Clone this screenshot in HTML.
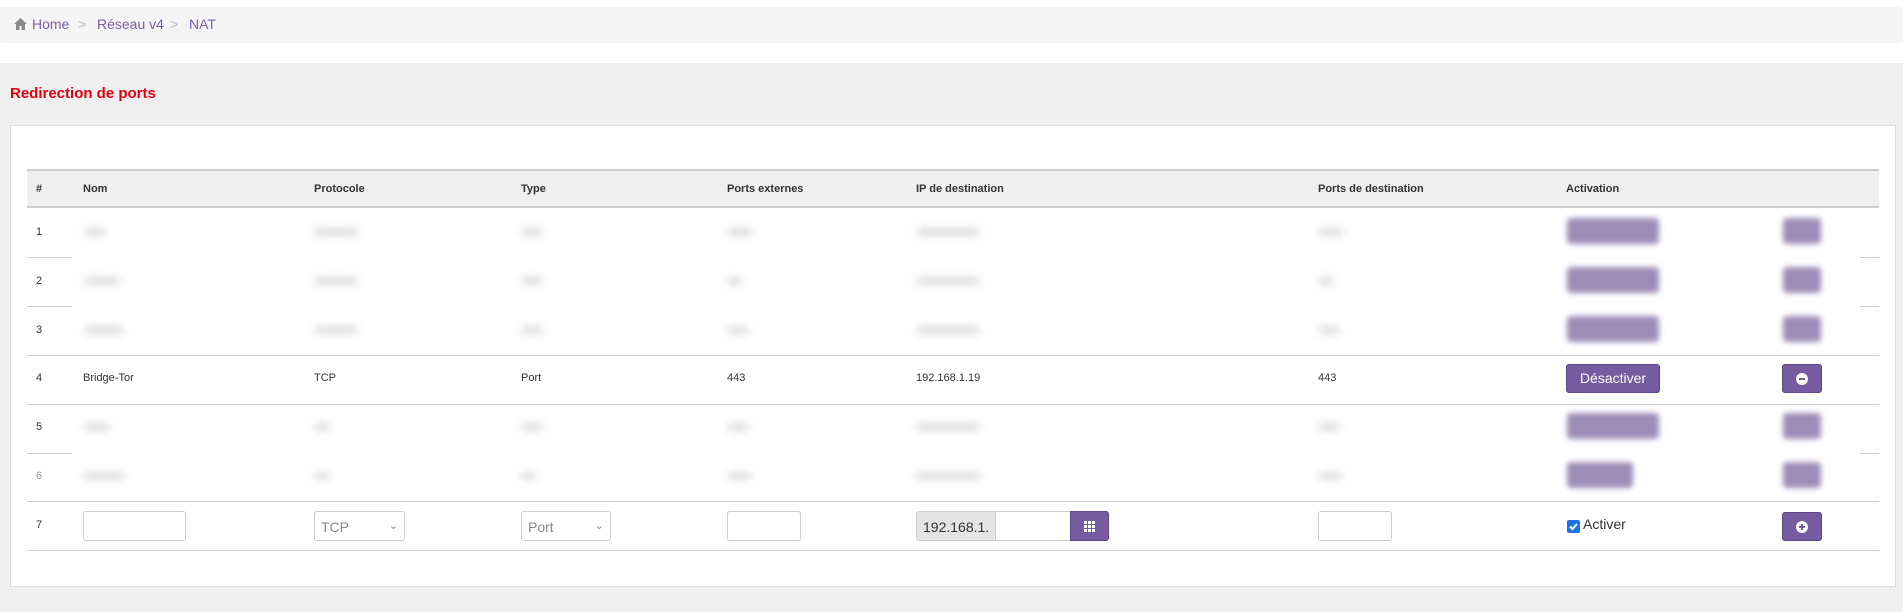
<!DOCTYPE html>
<html><head><meta charset="utf-8"><style>
*{box-sizing:border-box;margin:0;padding:0}
body{width:1903px;height:612px;background:#fff;font-family:"Liberation Sans",sans-serif;position:relative;overflow:hidden;color:#333}
.abs{position:absolute}
.bc{left:0;top:7px;width:1903px;height:36px;background:#f4f4f4;border-radius:3px}
.bc span{position:absolute;top:9px;font-size:14px;color:#7a5ea8}
.gray{left:0;top:63px;width:1903px;height:549px;background:#efefef}
.title{left:10px;top:85px;font-size:15px;font-weight:bold;color:#e2000f}
.card{left:10px;top:125px;width:1886px;height:462px;background:#fff;border:1px solid #ddd}
.th{left:27px;top:169px;width:1852px;height:39px;background:#efefef;border-top:2px solid #ccc;border-bottom:2px solid #ccc}
.h{position:absolute;top:183px;font-size:11px;font-weight:bold;color:#333}
.line{position:absolute;left:27px;width:1852px;height:1px;background:#ccc}
.t{position:absolute;font-size:11px;color:#333}
.bl{position:absolute;height:8px;background:#ddd;filter:blur(4px);border-radius:4px}
.bb{position:absolute;background:#9d8cb8;filter:blur(3px);border-radius:4px;height:26px}
.btn{position:absolute;background:#775ba0;border:1px solid #5f4787;border-radius:3px;color:#fff;font-size:14px;text-align:center}
.inp{position:absolute;top:511px;height:30px;border:1px solid #ccc;border-radius:3px;background:#fff;font-size:14px;color:#888;padding:7px 6px}
</style></head><body>
<div class="abs bc">
<svg class="abs" style="left:14px;top:11px" width="13" height="12" viewBox="0 0 13 12"><path d="M6.5 0L0 6h2v6h3.5V8h2v4H11V6h2z" fill="#888"/></svg>
<span style="left:32px">Home</span><span style="left:78px;color:#bbb">&gt;</span><span style="left:97px">Réseau v4</span><span style="left:170px;color:#bbb">&gt;</span><span style="left:189px">NAT</span>
</div>
<div class="abs gray"></div>
<div class="abs title">Redirection de ports</div>
<div class="abs card"></div>
<div class="abs th"></div>
<div class="h" style="left:36px">#</div><div class="h" style="left:83px">Nom</div><div class="h" style="left:314px">Protocole</div><div class="h" style="left:521px">Type</div><div class="h" style="left:727px">Ports externes</div><div class="h" style="left:916px">IP de destination</div><div class="h" style="left:1318px">Ports de destination</div><div class="h" style="left:1566px">Activation</div>

<div class="line" style="top:257px;width:45px"></div><div class="line" style="top:257px;left:1860px;width:19px"></div>
<div class="line" style="top:306px;width:45px"></div><div class="line" style="top:306px;left:1860px;width:19px"></div>
<div class="line" style="top:355px"></div><div class="line" style="top:404px"></div>
<div class="line" style="top:453px;width:45px"></div><div class="line" style="top:453px;left:1860px;width:19px"></div>
<div class="line" style="top:501px"></div><div class="line" style="top:550px"></div>

<div class="t" style="left:36px;top:226px">1</div><div class="t" style="left:36px;top:275px">2</div><div class="t" style="left:36px;top:324px">3</div>
<div class="t" style="left:36px;top:372px">4</div><div class="t" style="left:36px;top:421px">5</div><div class="t" style="left:36px;top:470px;color:#999">6</div><div class="t" style="left:36px;top:519px">7</div>

<div class="bl" style="left:84px;top:228px;width:22px"></div><div class="bl" style="left:314px;top:228px;width:44px"></div><div class="bl" style="left:521px;top:228px;width:22px"></div><div class="bl" style="left:727px;top:228px;width:26px"></div><div class="bl" style="left:916px;top:228px;width:64px"></div><div class="bl" style="left:1318px;top:228px;width:26px"></div>
<div class="bl" style="left:84px;top:277px;width:36px"></div><div class="bl" style="left:314px;top:277px;width:44px"></div><div class="bl" style="left:521px;top:277px;width:22px"></div><div class="bl" style="left:727px;top:277px;width:16px"></div><div class="bl" style="left:916px;top:277px;width:64px"></div><div class="bl" style="left:1318px;top:277px;width:16px"></div>
<div class="bl" style="left:84px;top:326px;width:40px"></div><div class="bl" style="left:314px;top:326px;width:44px"></div><div class="bl" style="left:521px;top:326px;width:22px"></div><div class="bl" style="left:727px;top:326px;width:22px"></div><div class="bl" style="left:916px;top:326px;width:64px"></div><div class="bl" style="left:1318px;top:326px;width:22px"></div>
<div class="bl" style="left:84px;top:423px;width:26px"></div><div class="bl" style="left:314px;top:423px;width:16px"></div><div class="bl" style="left:521px;top:423px;width:22px"></div><div class="bl" style="left:727px;top:423px;width:22px"></div><div class="bl" style="left:916px;top:423px;width:64px"></div><div class="bl" style="left:1318px;top:423px;width:22px"></div>
<div class="bl" style="left:84px;top:472px;width:40px"></div><div class="bl" style="left:314px;top:472px;width:16px"></div><div class="bl" style="left:521px;top:472px;width:16px"></div><div class="bl" style="left:727px;top:472px;width:24px"></div><div class="bl" style="left:916px;top:472px;width:64px"></div><div class="bl" style="left:1318px;top:472px;width:24px"></div>
<div class="bb" style="left:1567px;top:218px;width:92px"></div><div class="bb" style="left:1783px;top:218px;width:38px"></div>
<div class="bb" style="left:1567px;top:267px;width:92px"></div><div class="bb" style="left:1783px;top:267px;width:38px"></div>
<div class="bb" style="left:1567px;top:316px;width:92px"></div><div class="bb" style="left:1783px;top:316px;width:38px"></div>
<div class="bb" style="left:1567px;top:413px;width:92px"></div><div class="bb" style="left:1783px;top:413px;width:38px"></div>
<div class="bb" style="left:1567px;top:462px;width:66px"></div><div class="bb" style="left:1783px;top:462px;width:38px"></div>

<div class="t" style="left:83px;top:372px">Bridge-Tor</div><div class="t" style="left:314px;top:372px">TCP</div><div class="t" style="left:521px;top:372px">Port</div><div class="t" style="left:727px;top:372px">443</div><div class="t" style="left:916px;top:372px">192.168.1.19</div><div class="t" style="left:1318px;top:372px">443</div>
<div class="btn" style="left:1566px;top:364px;width:94px;height:29px;line-height:27px">Désactiver</div>
<div class="btn" style="left:1782px;top:364px;width:40px;height:29px"><svg style="margin-top:8px" width="12" height="12" viewBox="0 0 12 12"><circle cx="6" cy="6" r="6" fill="#fff"/><rect x="3" y="5" width="6" height="2" fill="#775ba0"/></svg></div>

<div class="inp" style="left:83px;width:103px"></div>
<div class="inp" style="left:314px;width:91px">TCP<span style="position:absolute;right:6px;font-size:11px">&#8964;</span></div>
<div class="inp" style="left:521px;width:90px">Port<span style="position:absolute;right:6px;font-size:11px">&#8964;</span></div>
<div class="inp" style="left:727px;width:74px"></div>
<div class="inp" style="left:916px;width:80px;background:#e4e4e4;color:#333;border-radius:3px 0 0 3px;padding:7px 6px">192.168.1.</div>
<div class="inp" style="left:995px;width:76px;border-radius:0"></div>
<div class="btn" style="left:1070px;top:511px;width:39px;height:30px;border-radius:0 3px 3px 0"><svg style="margin-top:9px" width="11" height="11" viewBox="0 0 11 11" fill="#fff"><rect x="0" y="0" width="3" height="3"/><rect x="4" y="0" width="3" height="3"/><rect x="8" y="0" width="3" height="3"/><rect x="0" y="4" width="3" height="3"/><rect x="4" y="4" width="3" height="3"/><rect x="8" y="4" width="3" height="3"/><rect x="0" y="8" width="3" height="3"/><rect x="4" y="8" width="3" height="3"/><rect x="8" y="8" width="3" height="3"/></svg></div>
<div class="inp" style="left:1318px;width:74px"></div>
<div class="abs" style="left:1567px;top:520px;width:13px;height:13px;background:#1a73e8;border-radius:2px"><svg width="13" height="13" viewBox="0 0 13 13"><path d="M3 6.5l2.5 2.5 4.5-5" stroke="#fff" stroke-width="2" fill="none"/></svg></div>
<div class="abs" style="left:1583px;top:516px;font-size:14px;color:#333">Activer</div>
<div class="btn" style="left:1782px;top:512px;width:40px;height:29px"><svg style="margin-top:8px" width="12" height="12" viewBox="0 0 12 12"><circle cx="6" cy="6" r="6" fill="#fff"/><rect x="3" y="5" width="6" height="2" fill="#775ba0"/><rect x="5" y="3" width="2" height="6" fill="#775ba0"/></svg></div>
</body></html>
